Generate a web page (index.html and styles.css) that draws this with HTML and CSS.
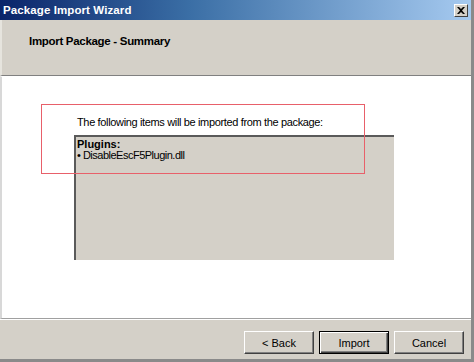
FILE: index.html
```html
<!DOCTYPE html>
<html>
<head>
<meta charset="utf-8">
<link rel="stylesheet" href="styles.css">
</head>
<body>
<div class="window">
  <div class="titlebar">
    <span class="title">Package Import Wizard</span>
    <span class="close">
      <svg width="8" height="7" viewBox="0 0 8 7"><path d="M0 0h2l2 2 2-2h2L5 3.5 8 7H6L4 5 2 7H0l3-3.5z" fill="#000"/></svg>
    </span>
  </div>
  <div class="header">
    <div class="heading">Import Package - Summary</div>
  </div>
  <div class="content">
    <div class="intro">The following items will be imported from the package:</div>
    <div class="listbox">
      <div class="group">Plugins:</div>
      <div class="item">• DisableEscF5Plugin.dll</div>
    </div>
    <div class="highlight"></div>
  </div>
  <div class="footer">
    <button class="btn">&lt; Back</button>
    <button class="btn default">Import</button>
    <button class="btn">Cancel</button>
  </div>
</div>
</body>
</html>
```
FILE: styles.css
```css
html, body {
  margin: 0;
  padding: 0;
  background: #ffffff;
}
.window {
  width: 474px;
  height: 362px;
  box-sizing: border-box;
  display: flex;
  flex-direction: column;
  background: #d4d0c8;
  font-family: "Liberation Sans", Arial, sans-serif;
  font-size: 11px;
  color: #000;
  border-right: 3px solid #8a8a8a;
  border-bottom: 3px solid #8a8a8a;
}
.titlebar {
  height: 20px;
  flex: none;
  display: flex;
  align-items: center;
  justify-content: space-between;
  padding: 0 3px 0 3px;
  background: linear-gradient(to right, #0a246a 0%, #3a6ea5 40%, #a6caf0 100%);
}
.title {
  color: #fff;
  font-weight: bold;
  font-size: 11.5px;
  letter-spacing: 0.1px;
}
.close {
  width: 14px;
  height: 13px;
  box-sizing: border-box;
  background: #d4d0c8;
  border-top: 1px solid #fff;
  border-left: 1px solid #fff;
  border-right: 1px solid #404040;
  border-bottom: 1px solid #404040;
  display: flex;
  align-items: center;
  justify-content: center;
}
.header {
  height: 56px;
  flex: none;
  box-sizing: border-box;
  padding: 15px 0 0 27px;
  border-bottom: 1px solid #808080;
  border-left: 2px solid #e6e4de;
}
.heading {
  font-weight: bold;
  font-size: 11.5px;
  letter-spacing: -0.3px;
}
.content {
  position: relative;
  flex: 1;
  background: #fff;
  border-left: 2px solid #d8d8d8;
  border-top: 1px solid #fff;
  border-bottom: 1px solid #a0a0a0;
  padding: 39px 0 0 75px;
}
.intro {
  height: 15px;
  letter-spacing: -0.35px;
}
.listbox {
  margin-top: 4px;
  width: 320px;
  height: 125px;
  box-sizing: border-box;
  margin-left: -3px;
  background: #d4d0c8;
  border-top: 2px solid #5a5a5a;
  border-left: 2px solid #5a5a5a;
  padding: 2px 0 0 1px;
  line-height: 11px;
}
.group {
  font-weight: bold;
}
.item {
  letter-spacing: -0.5px;
}
.highlight {
  position: absolute;
  left: 39px;
  top: 27px;
  width: 322px;
  height: 68px;
  border: 1px solid #e8606a;
}
.footer {
  height: 40px;
  flex: none;
  display: flex;
  align-items: flex-start;
  justify-content: flex-end;
  gap: 5px;
  padding: 11px 7px 0 0;
  box-sizing: border-box;
  border-top: 1px solid #fff;
}
.btn {
  width: 70px;
  height: 23px;
  box-sizing: border-box;
  background: #d4d0c8;
  font-family: "Liberation Sans", Arial, sans-serif;
  font-size: 11px;
  color: #000;
  border-top: 1px solid #fff;
  border-left: 1px solid #fff;
  border-right: 1px solid #404040;
  border-bottom: 1px solid #404040;
  box-shadow: inset -1px -1px 0 #808080;
  padding: 0;
}
.btn.default {
  border: 1px solid #000;
  box-shadow: inset 1px 1px 0 #fff, inset -1px -1px 0 #404040, inset -2px -2px 0 #808080;
}
```
